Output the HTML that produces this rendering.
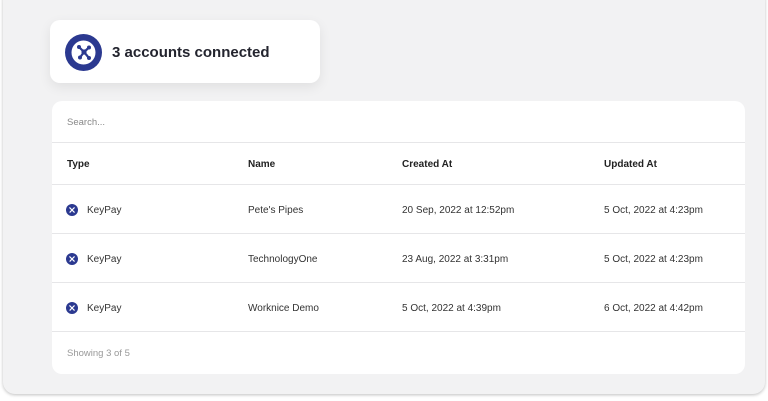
<!DOCTYPE html>
<html><head><style>
*{margin:0;padding:0;box-sizing:border-box}
body{width:768px;height:401px;background:#fff;font-family:"Liberation Sans",sans-serif;position:relative;overflow:hidden}
.outer{position:absolute;left:3px;top:-12px;width:762px;height:406px;background:#f2f2f3;border-radius:12px;box-shadow:0 1px 3px rgba(0,0,0,.25)}
.hdr{position:absolute;left:50px;top:20px;width:270px;height:63px;background:#fff;border-radius:10px;box-shadow:0 4px 12px rgba(0,0,0,.08)}
.hdr .t{position:absolute;left:62px;top:24px;font-size:15px;font-weight:bold;color:#23242e}
.card{position:absolute;left:52px;top:101px;width:693px;height:273px;background:#fff;border-radius:10px}
.row{position:absolute;left:0;width:693px;border-bottom:1px solid #e6e6e8;font-size:10px;color:#333}
.row span{position:absolute}
.ic{position:absolute}
</style></head><body>
<div class="outer"></div>
<div class="hdr">
<svg class="ic" style="left:15px;top:14px" width="37" height="37" viewBox="0 0 37 37"><circle cx="18.5" cy="18.5" r="18.5" fill="#2b3990"/><circle cx="18.5" cy="18.5" r="12" fill="#fff"/><g stroke="#2b3990" stroke-width="2.2" stroke-linecap="round"><path d="M19 18L14 13M19 18L24 13.5M19 18L15 23.5M19 18L24 24"/></g><g fill="#2b3990"><circle cx="19" cy="18" r="2.6"/><circle cx="14" cy="13" r="2"/><circle cx="24" cy="13.5" r="2"/><circle cx="15" cy="23.5" r="2"/><circle cx="24" cy="24" r="2"/></g></svg>
<div class="t">3 accounts connected</div>
</div>
<div class="card">
<div class="row" style="top:0;height:42px"><span style="left:15px;top:16px;color:#888;font-size:9.5px">Search...</span></div>
<div class="row" style="top:42px;height:42px;font-weight:bold;color:#222"><span style="left:15px;top:16px">Type</span><span style="left:196px;top:16px">Name</span><span style="left:350px;top:16px">Created At</span><span style="left:552px;top:16px">Updated At</span></div>
<div class="row" style="top:84px;height:49px"><svg class="ic" style="left:14px;top:19px" width="12" height="12" viewBox="0 0 12 12"><circle cx="6" cy="6" r="6" fill="#2b3990"/><path d="M6 6L3.8 3.8M6 6L8.2 3.8M6 6L4 8.2M6 6L8.2 8.2" stroke="#fff" stroke-width="1.2" stroke-linecap="round"/></svg><span style="left:35px;top:20px">KeyPay</span><span style="left:196px;top:20px">Pete's Pipes</span><span style="left:350px;top:20px">20 Sep, 2022 at 12:52pm</span><span style="left:552px;top:20px">5 Oct, 2022 at 4:23pm</span></div>
<div class="row" style="top:133px;height:49px"><svg class="ic" style="left:14px;top:19px" width="12" height="12" viewBox="0 0 12 12"><circle cx="6" cy="6" r="6" fill="#2b3990"/><path d="M6 6L3.8 3.8M6 6L8.2 3.8M6 6L4 8.2M6 6L8.2 8.2" stroke="#fff" stroke-width="1.2" stroke-linecap="round"/></svg><span style="left:35px;top:20px">KeyPay</span><span style="left:196px;top:20px">TechnologyOne</span><span style="left:350px;top:20px">23 Aug, 2022 at 3:31pm</span><span style="left:552px;top:20px">5 Oct, 2022 at 4:23pm</span></div>
<div class="row" style="top:182px;height:49px"><svg class="ic" style="left:14px;top:19px" width="12" height="12" viewBox="0 0 12 12"><circle cx="6" cy="6" r="6" fill="#2b3990"/><path d="M6 6L3.8 3.8M6 6L8.2 3.8M6 6L4 8.2M6 6L8.2 8.2" stroke="#fff" stroke-width="1.2" stroke-linecap="round"/></svg><span style="left:35px;top:20px">KeyPay</span><span style="left:196px;top:20px">Worknice Demo</span><span style="left:350px;top:20px">5 Oct, 2022 at 4:39pm</span><span style="left:552px;top:20px">6 Oct, 2022 at 4:42pm</span></div>
<div class="row" style="top:231px;height:42px;border:none"><span style="left:15px;top:16px;color:#999;font-size:9.5px">Showing 3 of 5</span></div>
</div>
</body></html>
